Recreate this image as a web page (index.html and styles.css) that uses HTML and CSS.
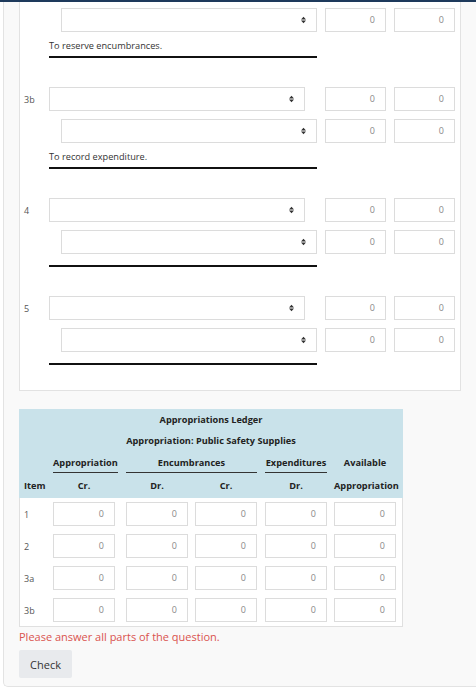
FILE: index.html
```html
<!DOCTYPE html>
<html>
<head>
<meta charset="utf-8">
<link rel="stylesheet" href="styles.css">
</head>
<body>
<div class="topbar"></div>
<div class="card">
  <div class="journal">
    <div class="entry first">
      <div class="line">
        <span class="lbl"></span>
        <div class="selarea"><div class="select cr"><svg class="arr" viewBox="0 0 6 9"><path d="M0 3.8L3 0.6L6 3.8Z M0 5.2L3 8.4L6 5.2Z"/></svg></div></div>
        <div class="num">0</div><div class="num">0</div>
      </div>
      <div class="desc">To reserve encumbrances.</div>
    </div>

    <div class="entry">
      <div class="line">
        <span class="lbl">3b</span>
        <div class="selarea"><div class="select"><svg class="arr" viewBox="0 0 6 9"><path d="M0 3.8L3 0.6L6 3.8Z M0 5.2L3 8.4L6 5.2Z"/></svg></div></div>
        <div class="num">0</div><div class="num">0</div>
      </div>
      <div class="line">
        <span class="lbl"></span>
        <div class="selarea"><div class="select cr"><svg class="arr" viewBox="0 0 6 9"><path d="M0 3.8L3 0.6L6 3.8Z M0 5.2L3 8.4L6 5.2Z"/></svg></div></div>
        <div class="num">0</div><div class="num">0</div>
      </div>
      <div class="desc">To record expenditure.</div>
    </div>

    <div class="entry">
      <div class="line">
        <span class="lbl">4</span>
        <div class="selarea"><div class="select"><svg class="arr" viewBox="0 0 6 9"><path d="M0 3.8L3 0.6L6 3.8Z M0 5.2L3 8.4L6 5.2Z"/></svg></div></div>
        <div class="num">0</div><div class="num">0</div>
      </div>
      <div class="line">
        <span class="lbl"></span>
        <div class="selarea"><div class="select cr"><svg class="arr" viewBox="0 0 6 9"><path d="M0 3.8L3 0.6L6 3.8Z M0 5.2L3 8.4L6 5.2Z"/></svg></div></div>
        <div class="num">0</div><div class="num">0</div>
      </div>
      <div class="desc"></div>
    </div>

    <div class="entry">
      <div class="line">
        <span class="lbl">5</span>
        <div class="selarea"><div class="select"><svg class="arr" viewBox="0 0 6 9"><path d="M0 3.8L3 0.6L6 3.8Z M0 5.2L3 8.4L6 5.2Z"/></svg></div></div>
        <div class="num">0</div><div class="num">0</div>
      </div>
      <div class="line">
        <span class="lbl"></span>
        <div class="selarea"><div class="select cr"><svg class="arr" viewBox="0 0 6 9"><path d="M0 3.8L3 0.6L6 3.8Z M0 5.2L3 8.4L6 5.2Z"/></svg></div></div>
        <div class="num">0</div><div class="num">0</div>
      </div>
      <div class="desc"></div>
    </div>
  </div>

  <div class="ledger">
    <div class="lhead">
      <div class="ltitle">Appropriations Ledger</div>
      <div class="ltitle">Appropriation: Public Safety Supplies</div>
      <div class="lgrid groups">
        <div></div>
        <div class="hc"><span class="ul">Appropriation</span></div>
        <div class="hc span2"><span class="ul wide">Encumbrances</span></div>
        <div class="hc"><span class="ul">Expenditures</span></div>
        <div class="hc"><span class="plain">Available</span></div>
      </div>
      <div class="lgrid subs">
        <div class="item">Item</div>
        <div class="hc"><span class="plain">Cr.</span></div>
        <div class="hc"><span class="plain">Dr.</span></div>
        <div class="hc"><span class="plain">Cr.</span></div>
        <div class="hc"><span class="plain">Dr.</span></div>
        <div class="hc"><span class="plain">Appropriation</span></div>
      </div>
    </div>
    <div class="lbody">
      <div class="brow"><span class="blbl">1</span><div class="num">0</div><div class="num">0</div><div class="num">0</div><div class="num">0</div><div class="num">0</div></div>
      <div class="brow"><span class="blbl">2</span><div class="num">0</div><div class="num">0</div><div class="num">0</div><div class="num">0</div><div class="num">0</div></div>
      <div class="brow"><span class="blbl">3a</span><div class="num">0</div><div class="num">0</div><div class="num">0</div><div class="num">0</div><div class="num">0</div></div>
      <div class="brow"><span class="blbl">3b</span><div class="num">0</div><div class="num">0</div><div class="num">0</div><div class="num">0</div><div class="num">0</div></div>
    </div>
  </div>

  <div class="error">Please answer all parts of the question.</div>
  <button class="check">Check</button>
</div>
</body>
</html>
```

FILE: styles.css
```css
html, body {
  margin: 0;
  padding: 0;
  background: #ffffff;
  font-family: "Open Sans", "DejaVu Sans", sans-serif;
  overflow: hidden;
}

.topbar {
  height: 2px;
  background: #1e3a5c;
}

.card {
  margin-left: 3px;
  background: #f9f9f9;
  border-left: 1px solid #e3e3e3;
  border-bottom: 1px solid #e3e3e3;
  border-bottom-left-radius: 5px;
  padding: 0 0 8px 15px;
}

.journal {
  width: 440px;
  background: #ffffff;
  border: 1px solid #e2e2e2;
  border-top: none;
  padding: 6px 0 25px 0;
}

.entry + .entry {
  margin-top: 29px;
}

.line {
  display: flex;
  align-items: center;
  height: 24px;
}

.line + .line {
  margin-top: 8px;
}

.lbl {
  width: 25px;
  padding-left: 4px;
  font-size: 9px;
  color: #555;
}

.selarea {
  width: 268px;
}

.select {
  position: relative;
  box-sizing: border-box;
  width: 256px;
  height: 24px;
  background: #fff;
  border: 1px solid #dcdcdc;
}

.select.cr {
  margin-left: 12px;
}

.arr {
  position: absolute;
  right: 10px;
  top: 7px;
  width: 5px;
  height: 8px;
  fill: #333;
}

.num {
  box-sizing: border-box;
  width: 61px;
  height: 24px;
  margin-left: 8px;
  background: #fff;
  border: 1px solid #dcdcdc;
  font-size: 9px;
  color: #888;
  text-align: right;
  padding-right: 10px;
  line-height: 22px;
}

.desc {
  margin-left: 29px;
  width: 268px;
  margin-top: 7px;
  padding-bottom: 4px;
  border-bottom: 2px solid #111;
  font-size: 9.2px;
  line-height: 13px;
  color: #333;
}

/* Ledger */
.ledger {
  width: 384px;
  margin-top: 18px;
}

.lhead {
  background: #c9e2ea;
  padding-bottom: 1px;
}

.ltitle {
  text-align: center;
  font-size: 9.2px;
  font-weight: bold;
  color: #222;
  line-height: 21px;
}

.lgrid {
  display: grid;
  grid-template-columns: 34px 73px 69px 70px 69px 69px;
  font-size: 9.2px;
  font-weight: bold;
  color: #222;
}

.groups {
  height: 23px;
  align-items: end;
}

.subs {
  height: 23px;
  align-items: center;
}

.hc {
  display: flex;
}

.span2 {
  grid-column: span 2;
}

.ul {
  display: block;
  min-width: 62px;
  text-align: center;
  border-bottom: 1px solid #333;
  line-height: 14px;
  padding-bottom: 2px;
  margin-bottom: 1px;
  white-space: nowrap;
}

.ul.wide {
  width: 131px;
}

.plain {
  display: block;
  min-width: 62px;
  text-align: center;
  white-space: nowrap;
  line-height: 14px;
  padding-bottom: 3px;
  margin-bottom: 1px;
}

.subs .plain {
  padding-bottom: 0;
  margin-bottom: 0;
}

.item {
  padding-left: 5px;
}

.lbody {
  background: #fff;
  border: 1px solid #e0e0e0;
  border-top: none;
}

.brow {
  display: grid;
  grid-template-columns: 33px 73px 69px 70px 69px 68px;
  height: 32px;
  align-items: center;
}

.brow .num {
  width: 62px;
  margin-left: 0;
}

.blbl {
  padding-left: 4px;
  font-size: 9px;
  color: #555;
}

.error {
  margin-top: 2px;
  font-size: 11px;
  line-height: 15px;
  color: #d9534f;
}

.check {
  margin-top: 6px;
  width: 53px;
  height: 28px;
  border: none;
  border-radius: 2px;
  background: #e8eaed;
  font-family: "Open Sans", "DejaVu Sans", sans-serif;
  font-size: 11px;
  color: #333;
  padding: 0;
  display: block;
}
```
